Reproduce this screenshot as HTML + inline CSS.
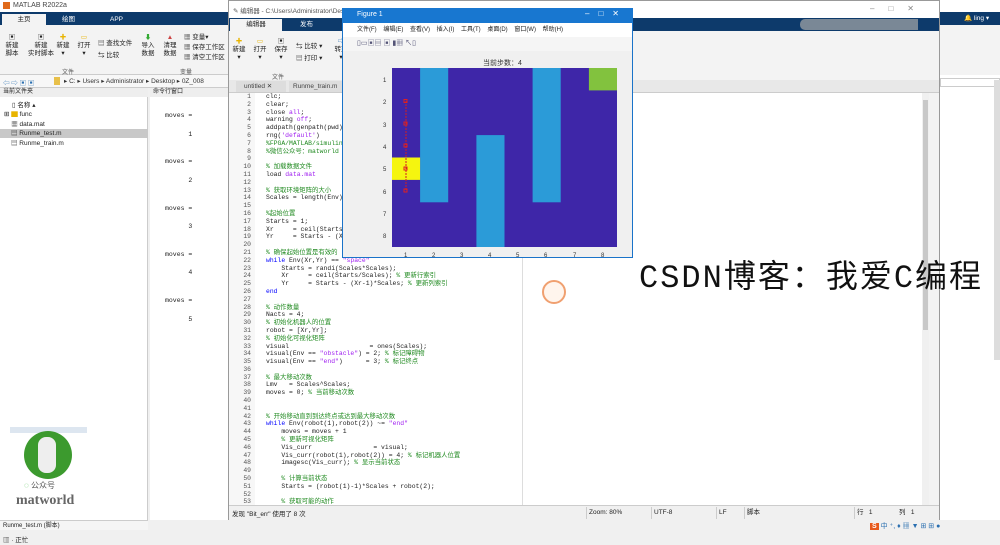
<!DOCTYPE html>
<html><head><meta charset="utf-8"><style>
*{margin:0;padding:0;box-sizing:border-box}
body{width:1000px;height:545px;overflow:hidden;background:#f0f0f0;font-family:"Liberation Sans","Noto Sans CJK SC",sans-serif;font-size:7px;color:#222;position:relative}
.a{position:absolute}
.mono{font-family:"Liberation Mono","Noto Sans CJK SC",monospace}
.code{white-space:pre;font-size:6.4px;line-height:7.8px}
.c{color:#228b22}.s{color:#a020f0}.k{color:#0000ff}
.btn{position:absolute;text-align:center;font-size:6.5px;line-height:8px}
</style></head><body>
<div class="a" style="left:0;top:0;width:1000px;height:12px;background:#fff"></div>
<div class="a" style="left:3px;top:2px;width:7px;height:7px;background:#e06a1b"></div>
<div class="a" style="left:13px;top:2px;font-size:7px;color:#444">MATLAB R2022a</div>
<div class="a" style="left:0;top:12px;width:1000px;height:13px;background:#0d3a6b"></div>
<div class="a" style="left:2px;top:14px;width:44px;height:11px;background:#f3f3f3;text-align:center;font-size:6.5px;line-height:11px">主页</div>
<div class="a" style="left:62px;top:14px;color:#fff;font-size:6.5px;line-height:11px">绘图</div>
<div class="a" style="left:110px;top:14px;color:#fff;font-size:6.5px;line-height:11px">APP</div>
<div class="a" style="left:0;top:25px;width:1000px;height:50px;background:#f3f3f3;border-bottom:1px solid #ccc"></div>
<div class="btn" style="left:2px;top:34px;width:20px">▣<br>新建<br>脚本</div>
<div class="btn" style="left:28px;top:34px;width:26px">▣<br>新建<br>实时脚本</div>
<div class="btn" style="left:55px;top:34px;width:16px"><span style="color:#e8b400">✚</span><br>新建<br>▾</div>
<div class="btn" style="left:76px;top:34px;width:16px"><span style="color:#e8b400">▭</span><br>打开<br>▾</div>
<div class="a" style="left:98px;top:37px;font-size:6.5px">▤ 查找文件</div>
<div class="a" style="left:98px;top:49px;font-size:6.5px">⇆ 比较</div>
<div class="a" style="left:62px;top:67px;font-size:6px;color:#555">文件</div>
<div class="btn" style="left:140px;top:34px;width:16px"><span style="color:#3a3">⬇</span><br>导入<br>数据</div>
<div class="btn" style="left:162px;top:34px;width:16px"><span style="color:#c44">▲</span><br>清理<br>数据</div>
<div class="a" style="left:184px;top:33px;font-size:6.5px;line-height:10px">▦ 变量▾<br>▦ 保存工作区<br>▦ 清空工作区</div>
<div class="a" style="left:180px;top:67px;font-size:6px;color:#555">变量</div>
<div class="a" style="left:0;top:75px;width:1000px;height:13px;background:#f7f7f7;border-bottom:1px solid #ccc"></div>
<div class="a" style="left:3px;top:77px;font-size:6.5px;color:#2a6fb0">⇦ ⇨ ▣ ▣</div>
<div class="a" style="left:54px;top:77px;width:6px;height:8px;background:#e8c04a"></div>
<div class="a" style="left:64px;top:77px;font-size:6.5px;color:#333">▸ C: ▸ Users ▸ Administrator ▸ Desktop ▸ 0Z_008</div>
<div class="a" style="left:0;top:88px;width:148px;height:432px;background:#fff;border-right:1px solid #ccc"></div>
<div class="a" style="left:0;top:88px;width:148px;height:9px;background:#eee;font-size:6px;padding-left:3px;line-height:9px">当前文件夹</div>
<div class="a" style="left:12px;top:99px;font-size:6.5px">▯ 名称 ▴</div>
<div class="a" style="left:4px;top:110px;font-size:6.5px;line-height:9.5px">⊞ <span style="color:#e8b400">▇</span> func<br>&nbsp;&nbsp;&nbsp;&nbsp;▦ data.mat</div>
<div class="a" style="left:0;top:129px;width:148px;height:9px;background:#c8c8c8"></div>
<div class="a" style="left:11px;top:129px;font-size:6.5px;line-height:9.5px">▤ Runme_test.m<br>▤ Runme_train.m</div>
<div class="a" style="left:10px;top:427px;width:77px;height:6px;background:#dde6f0"></div>
<div class="a" style="left:24px;top:431px;width:48px;height:48px;border-radius:50%;background:#3c9a2e"></div>
<div class="a" style="left:38px;top:437px;width:18px;height:36px;background:#eee;border-radius:8px"></div>
<div class="a" style="left:24px;top:480px;font-size:8px;color:#555"><span style="color:#2cb52c">◌</span> 公众号</div>
<div class="a" style="left:16px;top:493px;font-size:14px;font-weight:bold;font-family:'Liberation Serif',serif;color:#666">matworld</div>
<div class="a" style="left:0;top:520px;width:148px;height:10px;background:#f5f5f5;border-top:1px solid #ccc;font-size:6px;padding-left:3px;line-height:10px">Runme_test.m (脚本)</div>
<div class="a" style="left:150px;top:88px;width:80px;height:432px;background:#fff"></div>
<div class="a" style="left:150px;top:88px;width:80px;height:9px;background:#eee;font-size:6px;padding-left:3px;line-height:9px">命令行窗口</div>
<div class="a mono" style="left:165px;top:111px;font-size:6.5px;line-height:9.25px;white-space:pre">moves =

      1


moves =

      2


moves =

      3


moves =

      4


moves =

      5</div>
<div class="a" style="left:0;top:532px;width:1000px;height:13px;background:#f0f0f0"></div>
<div class="a" style="left:3px;top:534px;font-size:6.5px">▥ · 正忙</div>
<div class="a" style="left:940px;top:25px;width:60px;height:495px;background:#fff"></div>
<div class="a" style="left:940px;top:25px;width:60px;height:50px;background:#f3f3f3"></div>
<div class="a" style="left:940px;top:12px;width:60px;height:13px;background:#0d3a6b;color:#fff;font-size:6.5px;line-height:13px;padding-left:24px">🔔 ling ▾</div>
<div class="a" style="left:940px;top:78px;width:60px;height:9px;background:#fff;border:1px solid #ccc"></div>
<div class="a" style="left:994px;top:80px;width:6px;height:280px;background:#ddd"></div>
<div class="a" style="left:228px;top:0;width:712px;height:520px;background:#f3f3f3;border:1px solid #999"></div>
<div class="a" style="left:229px;top:1px;width:710px;height:17px;background:#fff"></div>
<div class="a" style="left:233px;top:5px;font-size:6.5px;color:#555">✎ 编辑器 - C:\Users\Administrator\Desktop\...</div>
<div class="a" style="left:870px;top:4px;font-size:8px;color:#888;letter-spacing:14px">–□✕</div>
<div class="a" style="left:229px;top:18px;width:710px;height:13px;background:#0d3a6b"></div>
<div class="a" style="left:230px;top:19px;width:52px;height:12px;background:#f3f3f3;text-align:center;font-size:6.5px;line-height:12px">编辑器</div>
<div class="a" style="left:300px;top:19px;color:#fff;font-size:6.5px;line-height:12px">发布</div>
<div class="a" style="left:800px;top:19px;width:118px;height:11px;background:#7a8896;border-radius:5px 0 0 5px"></div>
<div class="btn" style="left:232px;top:38px;width:14px"><span style="color:#e8b400">✚</span><br>新建<br>▾</div>
<div class="btn" style="left:253px;top:38px;width:14px"><span style="color:#e8b400">▭</span><br>打开<br>▾</div>
<div class="btn" style="left:274px;top:38px;width:14px">▣<br>保存<br>▾</div>
<div class="a" style="left:296px;top:41px;font-size:6.5px;line-height:12px">⇆ 比较 ▾<br>▤ 打印 ▾</div>
<div class="btn" style="left:334px;top:38px;width:14px"><span style="color:#2a6fb0">⇨</span><br>转至<br>▾</div>
<div class="a" style="left:272px;top:72px;font-size:6px;color:#555">文件</div>
<div class="a" style="left:229px;top:80px;width:710px;height:13px;background:#e8e8e8;border-bottom:1px solid #ccc"></div>
<div class="a" style="left:236px;top:81px;width:50px;height:11px;background:#ddd;font-size:6.5px;line-height:11px;padding-left:8px;color:#444">untitled ✕</div>
<div class="a" style="left:289px;top:81px;width:64px;height:11px;background:#ddd;font-size:6.5px;line-height:11px;padding-left:4px;color:#444">Runme_train.m</div>
<div class="a" style="left:229px;top:93px;width:696px;height:412px;background:#fff"></div>
<div class="a" style="left:229px;top:93px;width:26px;height:412px;background:#f7f7f7"></div>
<div class="a" style="left:522px;top:93px;width:1px;height:412px;background:#ddd"></div>
<div class="a" style="left:922px;top:93px;width:7px;height:412px;background:#f0f0f0"></div>
<div class="a" style="left:923px;top:100px;width:5px;height:230px;background:#c8c8c8"></div>
<div class="a mono code" style="left:231px;top:93px;width:20px;text-align:right;color:#555">1
2
3
4
5
6
7
8
9
10
11
12
13
14
15
16
17
18
19
20
21
22
23
24
25
26
27
28
29
30
31
32
33
34
35
36
37
38
39
40
41
42
43
44
45
46
47
48
49
50
51
52
53</div>
<div class="a mono code" style="left:266px;top:93px">clc;
clear;
close <span class="s">all</span>;
warning <span class="s">off</span>;
addpath(genpath(pwd));
rng(<span class="s">'default'</span>)
<span class="c">%FPGA/MATLAB/simulink仿真</span>
<span class="c">%微信公众号：matworld</span>

<span class="c">% 加载数据文件</span>
load <span class="s">data.mat</span>

<span class="c">% 获取环境矩阵的大小</span>
Scales = length(Env);

<span class="c">%起始位置</span>
Starts = 1;
Xr     = ceil(Starts/Scales);
Yr     = Starts - (Xr-1)*Scales;

<span class="c">% 确保起始位置是有效的（非障碍）</span>
<span class="k">while</span> Env(Xr,Yr) == <span class="s">"space"</span>
    Starts = randi(Scales*Scales);
    Xr     = ceil(Starts/Scales); <span class="c">% 更新行索引</span>
    Yr     = Starts - (Xr-1)*Scales; <span class="c">% 更新列索引</span>
<span class="k">end</span>

<span class="c">% 动作数量</span>
Nacts = 4;
<span class="c">% 初始化机器人的位置</span>
robot = [Xr,Yr];
<span class="c">% 初始化可视化矩阵</span>
visual                     = ones(Scales);
visual(Env == <span class="s">"obstacle"</span>) = 2; <span class="c">% 标记障碍物</span>
visual(Env == <span class="s">"end"</span>)      = 3; <span class="c">% 标记终点</span>

<span class="c">% 最大移动次数</span>
Lmv   = Scales^Scales;
moves = 0; <span class="c">% 当前移动次数</span>


<span class="c">% 开始移动直到到达终点或达到最大移动次数</span>
<span class="k">while</span> Env(robot(1),robot(2)) ~= <span class="s">"end"</span>
    moves = moves + 1
    <span class="c">% 更新可视化矩阵</span>
    Vis_curr                = visual;
    Vis_curr(robot(1),robot(2)) = 4; <span class="c">% 标记机器人位置</span>
    imagesc(Vis_curr); <span class="c">% 显示当前状态</span>

    <span class="c">% 计算当前状态</span>
    Starts = (robot(1)-1)*Scales + robot(2);

    <span class="c">% 获取可能的动作</span></div>
<div class="a" style="left:229px;top:505px;width:710px;height:15px;background:#f0f0f0;border-top:1px solid #ccc"></div>
<div class="a" style="left:232px;top:508px;font-size:6.5px">发现 "Bit_err" 使用了 8 次</div>
<div class="a" style="left:584px;top:507px;width:348px;height:12px;font-size:6.5px;line-height:12px">
<span class="a" style="left:2px;border-left:1px solid #ccc;padding-left:2px">Zoom: 80%</span>
<span class="a" style="left:67px;border-left:1px solid #ccc;padding-left:2px">UTF-8</span>
<span class="a" style="left:132px;border-left:1px solid #ccc;padding-left:2px">LF</span>
<span class="a" style="left:160px;border-left:1px solid #ccc;padding-left:2px">脚本</span>
<span class="a" style="left:270px;border-left:1px solid #ccc;padding-left:2px">行 &nbsp; 1</span>
<span class="a" style="left:315px">列 &nbsp; 1</span></div>
<div class="a" style="left:870px;top:521px;width:130px;height:11px;background:#f0f0f0;font-size:7px;color:#2a6fb0;line-height:11px"><span style="background:#e85a1c;color:#fff;padding:0 2px;font-weight:bold">S</span> 中 ⁺, ♦ ▦ ▼ ⊞ ⊞ ●</div>
<div class="a" style="left:639px;top:251px;font-size:32px;letter-spacing:2px;color:#111;font-family:'Liberation Mono','Noto Sans CJK SC',monospace;white-space:nowrap">CSDN博客：我爱C编程</div>
<div class="a" style="left:542px;top:280px;width:24px;height:24px;border-radius:50%;border:2px solid #f0a070;background:rgba(255,230,210,.4)"></div>
<div class="a" style="left:342px;top:8px;width:291px;height:250px;background:#f0f0f0;border:1px solid #1a73c9"></div>
<div class="a" style="left:342px;top:8px;width:291px;height:15px;background:#1877d0"></div>
<div class="a" style="left:357px;top:11px;color:#fff;font-size:7px">Figure 1</div>
<div class="a" style="left:585px;top:9px;color:#fff;font-size:8px;letter-spacing:9px">–□✕</div>
<div class="a" style="left:343px;top:23px;width:289px;height:14px;background:#fff;font-size:6px;line-height:14px;padding-left:14px;word-spacing:5px">文件(F) 编辑(E) 查看(V) 插入(I) 工具(T) 桌面(D) 窗口(W) 帮助(H)</div>
<div class="a" style="left:343px;top:37px;width:289px;height:14px;background:#f5f5f5;font-size:7px;line-height:14px;padding-left:14px;color:#557">▯▭▣▤ ▣ ▮▦ ↖▯</div>
<div class="a" style="left:343px;top:51px;width:289px;height:206px;background:#f0f0f0"></div>
<div class="a" style="left:483px;top:58px;font-size:7px;color:#333">当前步数：4</div>
<svg class="a" style="left:380px;top:66px" width="245" height="192">
<g transform="translate(12,2)">
<rect x="0" y="0" width="225" height="179" fill="#3e26a8"/>
<rect x="28.1" y="0" width="28.1" height="134.3" fill="#2b9bd8"/>
<rect x="84.4" y="67.1" width="28.1" height="111.9" fill="#2b9bd8"/>
<rect x="140.6" y="0" width="28.1" height="134.3" fill="#2b9bd8"/>
<rect x="196.9" y="0" width="28.1" height="22.4" fill="#82c23e"/>
<rect x="0" y="89.5" width="28.1" height="22.4" fill="#f5f50f"/>
<line x1="14" y1="33" x2="14" y2="123" stroke="#d02020" stroke-width="1" stroke-dasharray="2,1"/>
<g fill="none" stroke="#e02020" stroke-width="1"><rect x="12" y="31.5" width="3" height="3"/><rect x="12" y="54" width="3" height="3"/><rect x="12" y="76" width="3" height="3"/><rect x="12" y="99" width="3" height="3"/><rect x="12" y="121" width="3" height="3"/></g>
</g>
<g font-size="6" fill="#333" font-family="Liberation Sans">
<text x="3" y="16">1</text><text x="3" y="38">2</text><text x="3" y="61">3</text><text x="3" y="83">4</text><text x="3" y="105">5</text><text x="3" y="128">6</text><text x="3" y="150">7</text><text x="3" y="172">8</text>
<text x="24" y="191">1</text><text x="52" y="191">2</text><text x="80" y="191">3</text><text x="108" y="191">4</text><text x="136" y="191">5</text><text x="164" y="191">6</text><text x="193" y="191">7</text><text x="221" y="191">8</text>
</g></svg>
</body></html>
